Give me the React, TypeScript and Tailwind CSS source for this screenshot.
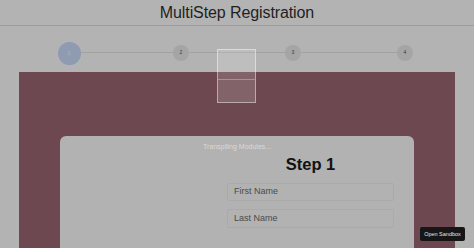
import React from "react";

export default function App() {
  const steps = ["1", "2", "3", "4"];
  return (
    <div className="relative w-[474px] h-[248px] overflow-hidden bg-[#b3b3b3] flex flex-col font-['Liberation_Sans',Arial,sans-serif]">
      <header className="h-[26px] shrink-0 border-b border-[#9d9d9d] flex items-center justify-center">
        <h1 className="text-[16px] leading-none text-[#1f1f1f] tracking-[-0.1px]">MultiStep Registration</h1>
      </header>

      <div className="relative h-[46px] shrink-0 pt-[8px]">
        <div className="absolute left-[69px] right-[69px] top-[26px] h-px bg-[#a2a2a2]" />
        <div className="relative grid grid-cols-[repeat(4,112px)] justify-center items-center h-[38px]">
          {steps.map((s, i) => (
            <div key={s} className="flex justify-center">
              {i === 0 ? (
                <div className="w-[23px] h-[23px] rounded-full bg-[#8f9bb1] flex items-center justify-center text-[6px] text-[#a9b3c6]">
                  {s}
                </div>
              ) : (
                <div className="w-[16px] h-[16px] rounded-full bg-[#a5a5a5] flex items-center justify-center text-[5px] text-[#3a3a3a]">
                  {s}
                </div>
              )}
            </div>
          ))}
        </div>
      </div>

      <div className="mx-[19px] flex-1 bg-[#6e4850] pt-[64px] px-[41px] flex flex-col">
        <div className="flex-1 bg-[#b2b2b2] rounded-t-[6px] flex flex-col">
          <p className="mt-[7px] text-center text-[7px] leading-[8px] text-[#d9d9d9]">Transpiling Modules...</p>
          <div className="flex justify-end pr-[20px]">
            <div className="w-[167px] flex flex-col">
              <h2 className="mt-[3px] text-center text-[16.5px] leading-[20px] font-bold text-[#111]">Step 1</h2>
              <div className="mt-[9px] h-[18px] border border-[#aaaaaa] rounded-[2px] flex items-center pl-[6px] text-[9px] text-[#4a4a4a]">First Name</div>
              <div className="mt-[8px] h-[19px] border border-[#aaaaaa] rounded-[2px] flex items-center pl-[6px] text-[9px] text-[#4a4a4a]">Last Name</div>
            </div>
          </div>
        </div>
      </div>

      <div className="absolute left-[217px] top-[49px] w-[39px] h-[54px] border border-white/45 bg-white/15">
        <div className="mt-[29px] border-t border-white/30" />
      </div>

      <div className="absolute right-[9px] bottom-[7px] w-[45px] h-[14px] bg-[#161616] rounded-[2px] flex items-center justify-center text-[5.5px] text-[#e6e6e6]">
        Open Sandbox
      </div>
    </div>
  );
}
